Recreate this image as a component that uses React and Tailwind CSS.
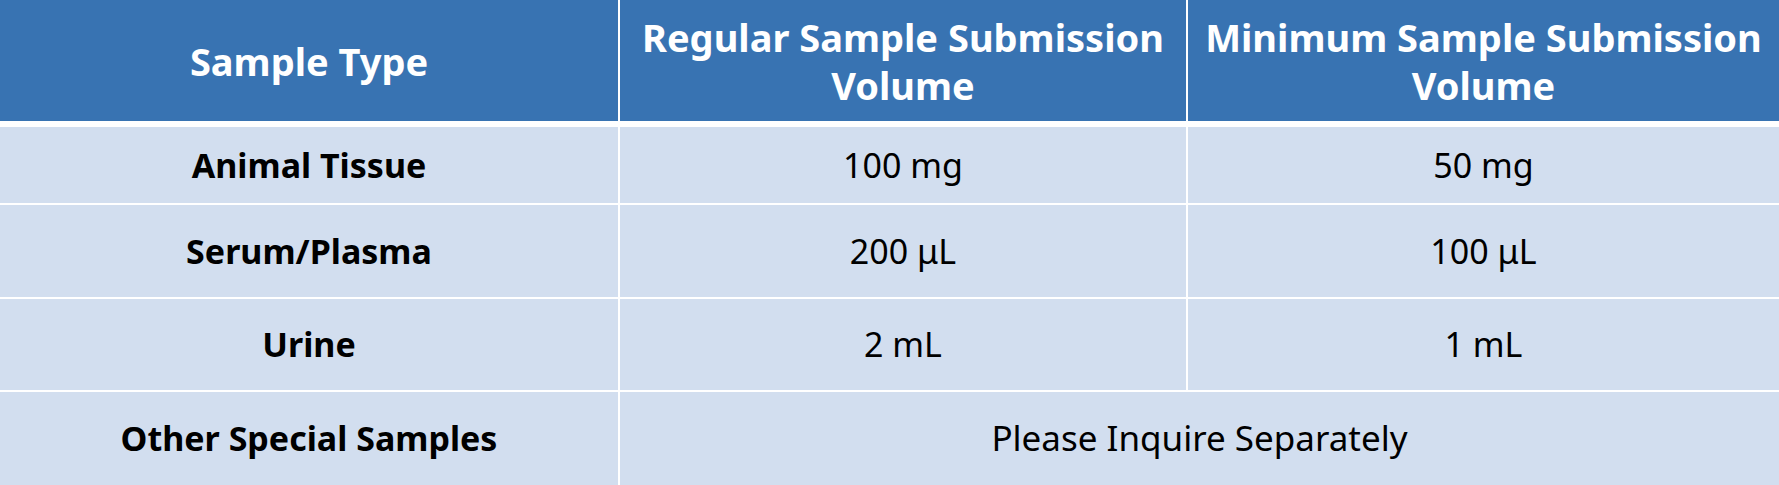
const rows = [
	{ type: "Animal Tissue", regular: "100 mg", minimum: "50 mg", h: "h-[76px]" },
	{ type: "Serum/Plasma", regular: "200 μL", minimum: "100 μL", h: "h-[92px]" },
	{ type: "Urine", regular: "2 mL", minimum: "1 mL", h: "h-[91px]" },
];

/**
 * Sample submission volume table.
 * @returns {JSX.Element}
 */
export default function App() {
	const font = { fontFamily: '"Noto Sans", "Open Sans", sans-serif' };

	return (
		<div className="w-[1779px] h-[485px] bg-white flex flex-col" style={font}>
			<div className="grid grid-cols-[618px_566px_591px] gap-x-[2px] h-[121px]">
				<div className="bg-[#3873b2] text-white font-bold text-[38px] leading-[48px] flex items-center justify-center text-center">Sample Type</div>
				<div className="bg-[#3873b2] text-white font-bold text-[38px] leading-[48px] flex items-center justify-center text-center px-1">Regular Sample Submission Volume</div>
				<div className="bg-[#3873b2] text-white font-bold text-[38px] leading-[48px] flex items-center justify-center text-center px-1">Minimum Sample Submission Volume</div>
			</div>

			<div className="mt-[6px] flex flex-col gap-y-[2px]">
				{rows.map((r) => (
					<div key={r.type} className={`grid grid-cols-[618px_566px_591px] gap-x-[2px] ${r.h}`}>
						<div className="bg-[#d2deef] text-black font-bold text-[34px] flex items-center justify-center">{r.type}</div>
						<div className="bg-[#d2deef] text-black text-[34px] flex items-center justify-center">{r.regular}</div>
						<div className="bg-[#d2deef] text-black text-[34px] flex items-center justify-center">{r.minimum}</div>
					</div>
				))}
				<div className="grid grid-cols-[618px_1159px] gap-x-[2px] h-[93px]">
					<div className="bg-[#d2deef] text-black font-bold text-[34px] flex items-center justify-center">Other Special Samples</div>
					<div className="bg-[#d2deef] text-black text-[35px] flex items-center justify-center">Please Inquire Separately</div>
				</div>
			</div>
		</div>
	);
}
